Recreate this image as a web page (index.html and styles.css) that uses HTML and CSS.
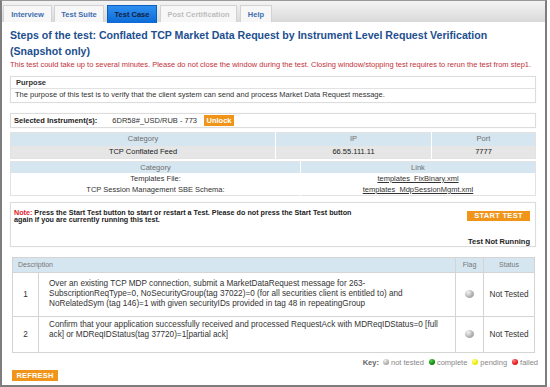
FILE: index.html
```html
<!DOCTYPE html>
<html>
<head>
<meta charset="utf-8">
<link rel="stylesheet" href="styles.css">
</head>
<body>
<div class="frame">
  <div class="tabbar">
    <span class="tab t-interview">Interview</span>
    <span class="tab t-suite">Test Suite</span>
    <span class="tab t-case active">Test Case</span>
    <span class="tab t-post disabled">Post Certification</span>
    <span class="tab t-help">Help</span>
  </div>
  <div class="content">
    <h1 class="title">Steps of the test: Conflated TCP Market Data Request by Instrument Level Request Verification (Snapshot only)</h1>
    <p class="warn">This test could take up to several minutes. Please do not close the window during the test. Closing window/stopping test requires to rerun the test from step1.</p>

    <div class="box purpose">
      <div class="purpose-head">Purpose</div>
      <div class="purpose-body">The purpose of this test is to verify that the client system can send and process Market Data Request message.</div>
    </div>

    <div class="box instr">
      <span class="instr-label">Selected Instrument(s):</span>
      <span class="instr-value">6DR58#_USD/RUB - 773</span>
      <span class="btn btn-unlock">Unlock</span>
    </div>

    <table class="grid grid-conn">
      <tr class="head"><td class="c-cat">Category</td><td class="c-ip">IP</td><td>Port</td></tr>
      <tr class="shade"><td>TCP Conflated Feed</td><td>66.55.111.11</td><td>7777</td></tr>
    </table>

    <table class="grid grid-links">
      <tr class="head"><td class="c-cat2">Category</td><td>Link</td></tr>
      <tr><td>Templates File:</td><td><a class="lnk">templates_FixBinary.xml</a></td></tr>
      <tr><td>TCP Session Management SBE Schema:</td><td><a class="lnk">templates_MdpSessionMgmt.xml</a></td></tr>
    </table>

    <div class="box note">
      <div class="note-row">
        <p class="note-text"><span class="note-label">Note:</span> Press the Start Test button to start or restart a Test. Please do not press the Start Test button<br>again if you are currently running this test.</p>
        <span class="btn btn-start">START TEST</span>
      </div>
      <div class="note-status">Test Not Running</div>
    </div>

    <table class="steps">
      <tr class="head"><td colspan="2" class="h-desc">Description</td><td class="h-flag">Flag</td><td class="h-status">Status</td></tr>
      <tr class="row1">
        <td class="num">1</td>
        <td class="desc">Over an existing TCP MDP connection, submit a MarketDataRequest message for 263-<br>SubscriptionReqType=0, NoSecurityGroup(tag 37022)=0 (for all securities client is entitled to) and<br>NoRelatedSym (tag 146)=1 with given securityIDs provided in tag 48 in repeatingGroup</td>
        <td class="flag"><span class="ball gray"></span></td>
        <td class="status">Not Tested</td>
      </tr>
      <tr class="row2">
        <td class="num">2</td>
        <td class="desc">Confirm that your application successfully received and processed RequestAck with MDReqIDStatus=0 [full<br>ack] or MDReqIDStatus(tag 37720)=1[partial ack]</td>
        <td class="flag"><span class="ball gray"></span></td>
        <td class="status">Not Tested</td>
      </tr>
    </table>

    <div class="key">
      <span class="key-label">Key:</span>
      <span class="kball gray"></span><span class="ktext">not tested</span>
      <span class="kball green"></span><span class="ktext">complete</span>
      <span class="kball yellow"></span><span class="ktext">pending</span>
      <span class="kball red"></span><span class="ktext">failed</span>
    </div>

    <div class="refresh-row"><span class="btn btn-refresh">REFRESH</span></div>
  </div>
</div>
</body>
</html>
```

FILE: styles.css
```css
* { box-sizing: border-box; }
html, body { margin: 0; padding: 0; background: #fff; }
body { font-family: "Liberation Sans", Arial, sans-serif; font-size: 7.5px; color: #333; }

.frame {
  width: 547px;
  height: 387px;
  border-left: 2px solid #7d7d7d;
  border-right: 2px solid #7d7d7d;
  border-bottom: 2px solid #7d7d7d;
  border-top: 1px solid #9a9a9a;
  overflow: hidden;
}

.tabbar {
  height: 21px;
  background: linear-gradient(#f4f4f4, #d9d9d9);
  display: flex;
  align-items: flex-end;
  padding-left: 1px;
}
.tab {
  height: 17px;
  line-height: 17px;
  padding: 0;
  background: #f7f7f7;
  border: 1px solid #d2d2d2;
  border-bottom: none;
  font-weight: bold;
  color: #3d6db0;
  text-align: center;
  white-space: nowrap;
}
.t-interview { width: 49px; }
.t-suite { width: 50px; margin-left: 2px; }
.t-case {
  width: 50px;
  margin-left: 3px;
  background: linear-gradient(#2f8ff0, #0c6bd6);
  border-color: #0b5fc0;
  color: #10213f;
  height: 18px;
  line-height: 18px;
  margin-bottom: -1px;
}
.t-post { width: 77px; margin-left: 3px; color: #bdbdbd; }
.t-help { width: 32px; margin-left: 3px; }

.content { padding: 0 9px 0 8px; }

.title {
  margin: 5px 0 0 0;
  font-size: 10.6px;
  line-height: 16px;
  font-weight: bold;
  color: #1e4f8f;
}
.warn {
  margin: 1px 0 0 0;
  line-height: 10px;
  color: #c2323a;
}

.box {
  border: 1px solid #dcdcdc;
  box-shadow: 0 0 1px #eee;
}

.purpose { margin-top: 6px; }
.purpose-head {
  height: 12px;
  line-height: 11px;
  padding-left: 5px;
  font-weight: bold;
  color: #333;
  border-bottom: 1px solid #e2e2e2;
}
.purpose-body {
  height: 13px;
  line-height: 12px;
  padding-left: 4px;
  color: #333;
}

.instr {
  margin-top: 10px;
  height: 15px;
  display: flex;
  align-items: center;
  padding-left: 3px;
}
.instr-label { font-weight: bold; color: #222; }
.instr-value { margin-left: 15px; color: #333; }
.btn {
  display: inline-block;
  background: #f0951a;
  color: #fff;
  font-weight: bold;
  text-align: center;
  white-space: nowrap;
}
.btn-unlock {
  margin-left: 7px;
  width: 30px;
  height: 11px;
  line-height: 11px;
}

.grid {
  width: 100%;
  border-collapse: collapse;
  text-align: center;
  border: 1px solid #e2e2e2;
}
.grid td { padding: 0; border-left: 1px solid #fff; }
.grid td:first-child { border-left: none; }
.grid .head td { background: #d5e6f1; color: #6e6e6e; height: 12px; line-height: 12px; }
.grid .shade td { background: #e6e6e6; color: #222; height: 12px; line-height: 12px; }
.grid-conn { margin-top: 4px; }
.grid-conn .head td { height: 13px; }
.c-cat { width: 265px; }
.c-ip { width: 156px; }
.grid-links { margin-top: 2px; }
.grid-links td { height: 11px; line-height: 11px; color: #333; }
.grid-links .head td { height: 11px; line-height: 11px; }
.c-cat2 { width: 290px; }
.lnk { color: #333; text-decoration: underline; }

.note { margin-top: 6px; height: 45px; padding: 6px 5px 0 3px; }
.note-row { display: flex; justify-content: space-between; align-items: flex-start; }
.note-text { margin: 0; font-size: 7.2px; font-weight: bold; color: #222; line-height: 7.6px; white-space: nowrap; }
.note-label { color: #e0202a; }
.btn-start {
  width: 63px;
  height: 10px;
  line-height: 10px;
  letter-spacing: 0.3px;
  margin-top: 2px;
}
.note-status {
  text-align: right;
  font-weight: bold;
  color: #222;
  margin-top: 13px;
}

.steps {
  margin-top: 10px;
  margin-left: 2px;
  width: 523px;
  border-collapse: collapse;
  border: 1px solid #d4d4d4;
}
.steps td { border: 1px solid #d4d4d4; padding: 0; color: #333; font-size: 8.2px; }
.steps .head td { background: #d5e6f1; color: #777; height: 15px; line-height: 14px; font-size: 7px; }
.h-desc { padding-left: 5px !important; }
.h-flag { width: 28px; text-align: center; }
.h-status { width: 51px; text-align: center; }
.num { width: 26px; text-align: center; }
.desc { padding: 5px 10px 6px 10px !important; line-height: 10px; white-space: nowrap; }
.row1 td { height: 44px; }
.row2 td { height: 36px; }
.row2 .desc { padding-top: 0 !important; padding-bottom: 8px !important; }
.flag { text-align: center; }
.status { text-align: center; }

.ball {
  display: inline-block;
  width: 9px;
  height: 8px;
  border-radius: 50%;
  vertical-align: middle;
}
.ball.gray, .kball.gray { background: radial-gradient(circle at 35% 30%, #f4f4f4, #b3b3b3 55%, #8a8a8a); }

.key {
  margin-top: 5px;
  display: flex;
  justify-content: flex-end;
  align-items: center;
  gap: 2px;
  color: #888;
  margin-right: -2px;
}
.key-label { font-weight: bold; color: #666; margin-right: 2px; }
.kball { display: inline-block; width: 6px; height: 6px; border-radius: 50%; }
.kball.green { background: radial-gradient(circle at 35% 30%, #5ad05a, #0b8a0b 60%); }
.kball.yellow { background: radial-gradient(circle at 35% 30%, #ffff90, #eaea00 60%); }
.kball.red { background: radial-gradient(circle at 35% 30%, #ff8080, #e01818 60%); }
.ktext { margin-right: 3px; }
.ktext:last-child { margin-right: 0; }

.refresh-row { margin-top: 3px; padding-left: 2px; }
.btn-refresh {
  width: 46px;
  height: 11px;
  line-height: 11px;
  letter-spacing: 0.2px;
}
```
